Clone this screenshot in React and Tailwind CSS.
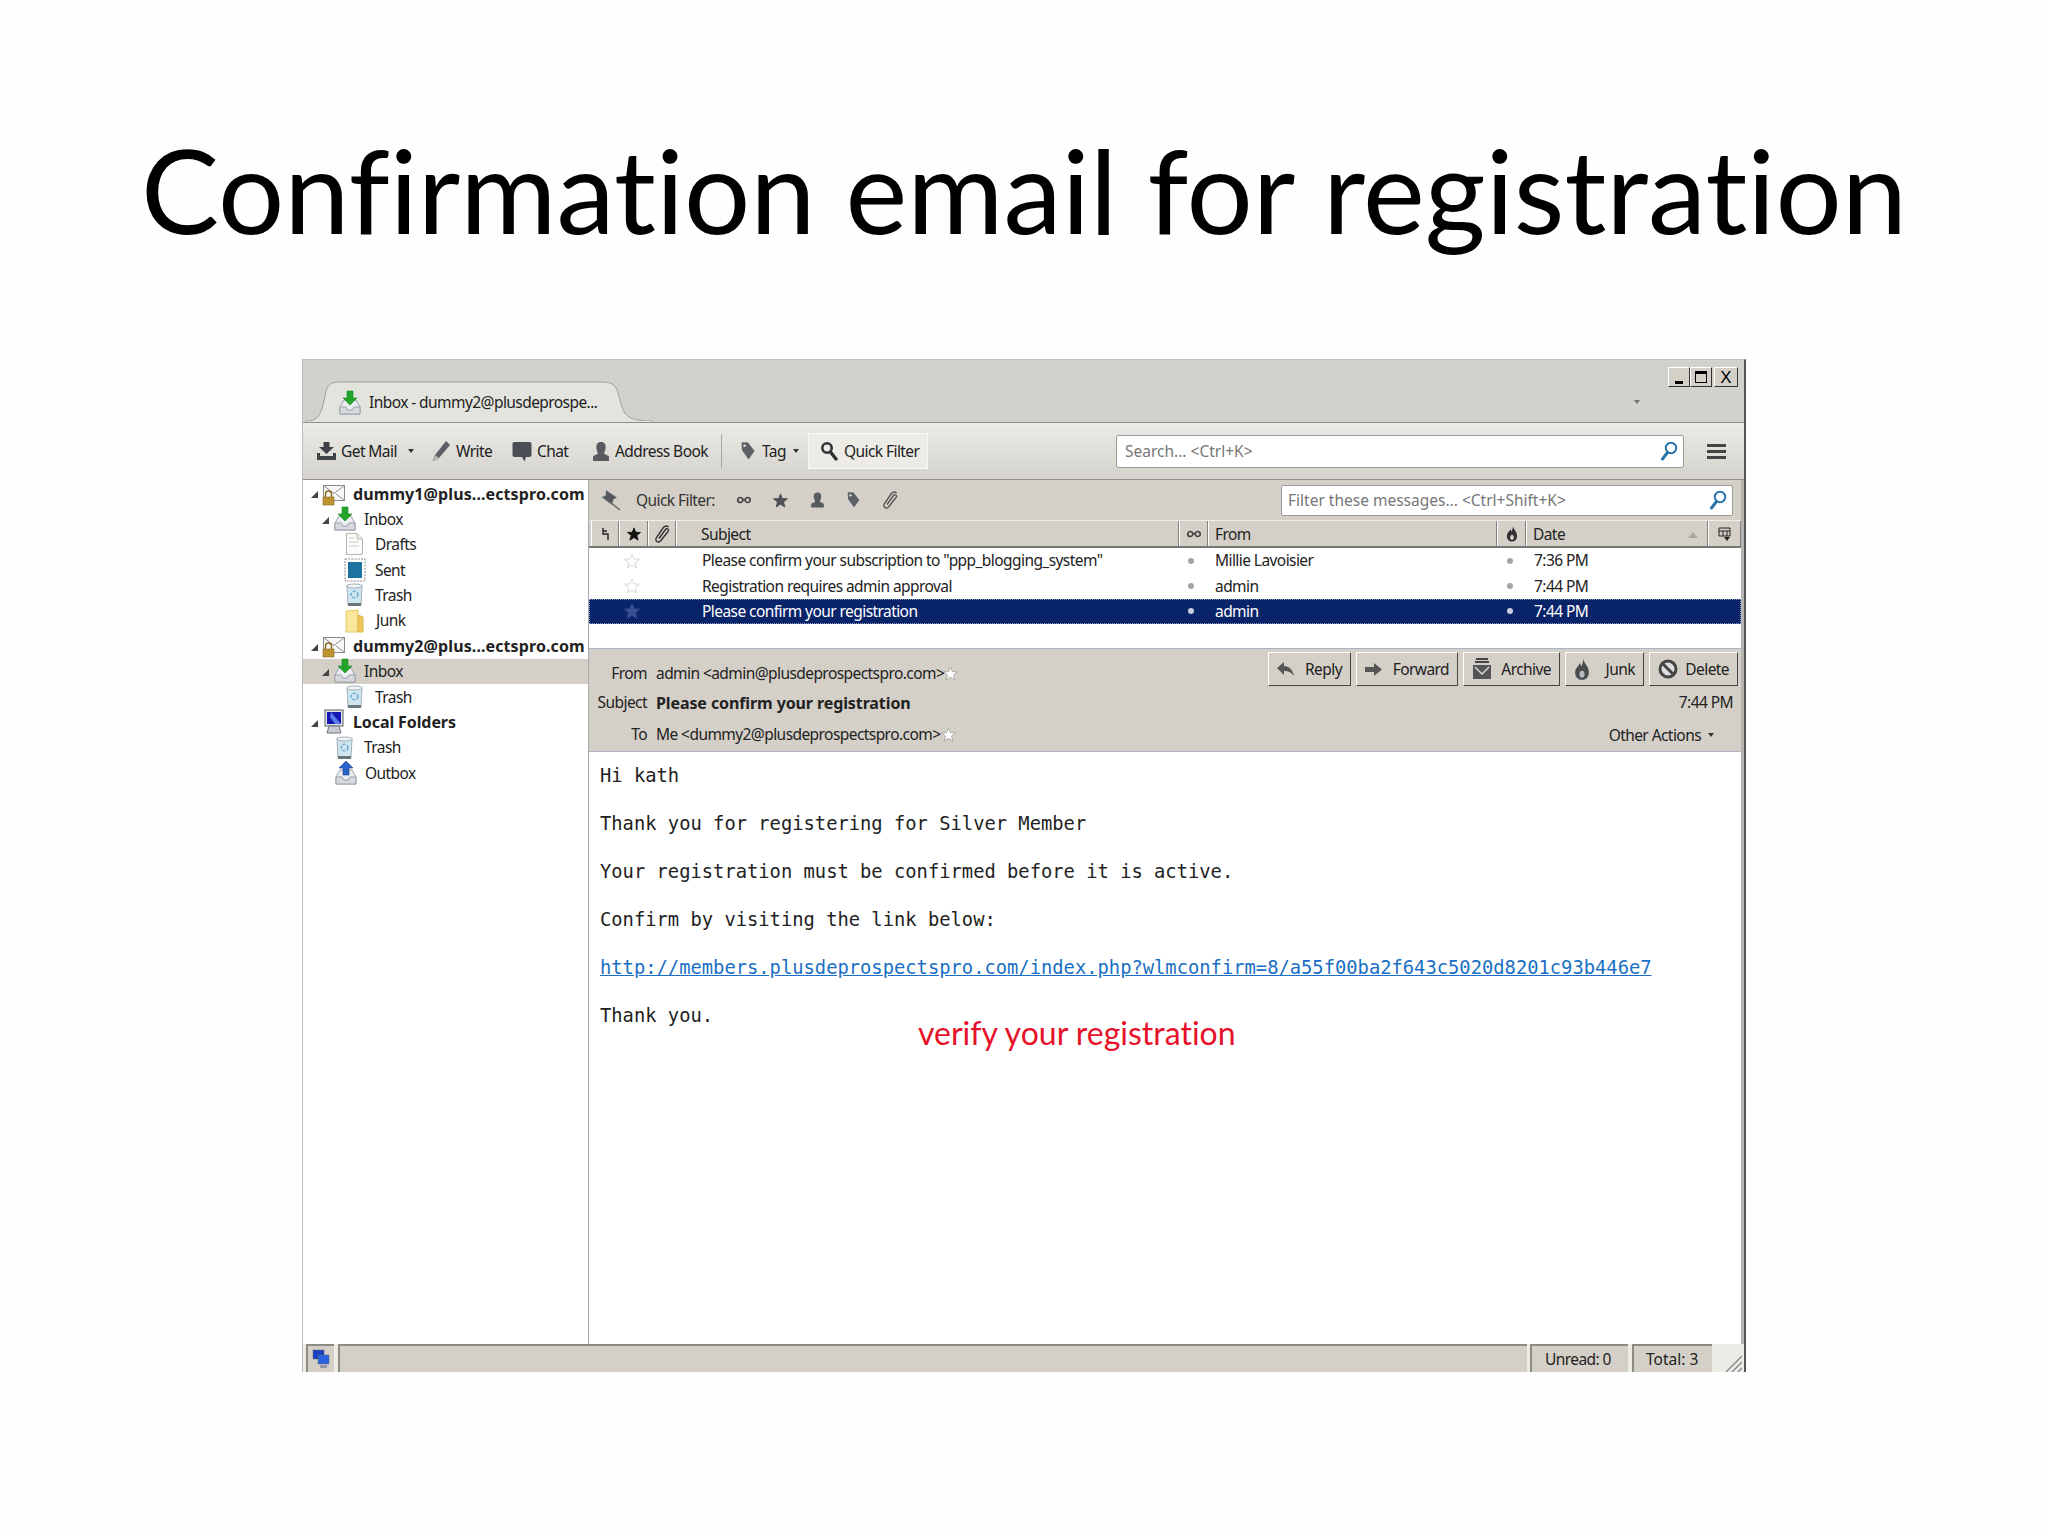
const base = "font-['Noto_Sans','Liberation_Sans',sans-serif] leading-none text-[#222] whitespace-nowrap";
const ui = base + " tracking-[-0.57px] text-[15.5px] pt-px";
const bold = base + " tracking-[-0.1px] text-[16px] font-bold text-[#111]";

const Svg = ({ w, h, vb, children, className = "" }) => (
  <svg width={w} height={h} viewBox={vb || `0 0 ${w} ${h}`} className={"shrink-0 block " + className}>{children}</svg>
);

const TrayIcon = ({ arrow = "down", size = 22 }) => (
  <Svg w={size} h={size + 4} vb="0 0 22 26">
    <path d="M5 10 L17 10 L21 17 V24 H1 V17 Z" fill="#e9ecf0" stroke="#9aa1aa" />
    <path d="M1 17 H7 L8.5 20 H13.5 L15 17 H21 V24 H1 Z" fill="#d6dade" stroke="#9aa1aa" />
    {arrow === "down" ? (
      <path d="M8 1 H14 V8 H18 L11 15 L4 8 H8 Z" fill="#22a62a" stroke="#1a8a20" strokeWidth="0.6" />
    ) : (
      <path d="M8 15 H14 V8 H18 L11 1 L4 8 H8 Z" fill="#2a62c8" stroke="#1b3f8c" strokeWidth="0.6" />
    )}
  </Svg>
);
const TrashIcon = () => (
  <Svg w={19} h={24}>
    <path d="M2 3 H17 L16 22 H3 Z" fill="#cfe6f0" stroke="#a4b0b6" />
    <rect x="3" y="20" width="13" height="3" fill="#6b757c" />
    <ellipse cx="9.5" cy="3" rx="8" ry="2" fill="#f0f4f6" stroke="#a4b0b6" />
    <circle cx="9.5" cy="11.5" r="3.4" fill="none" stroke="#5ea9d0" strokeWidth="1.4" strokeDasharray="3 1.6" />
  </Svg>
);
const DraftsIcon = () => (
  <Svg w={19} h={24}>
    <path d="M1.5 1.5 H12 L17.5 7 V22.5 H1.5 Z" fill="#fbfbf9" stroke="#b6b6b0" />
    <path d="M12 1.5 V7 H17.5" fill="#ececea" stroke="#b6b6b0" />
    <path d="M4 6 H9 M4 10 H14 M4 14 H14" stroke="#c8c8c2" />
  </Svg>
);
const SentIcon = () => (
  <Svg w={22} h={24}>
    <rect x="1" y="1" width="20" height="22" fill="#fff" stroke="#888" strokeDasharray="2 1.2" />
    <rect x="4" y="4" width="14" height="16" fill="#1c739f" />
  </Svg>
);
const JunkIcon = () => (
  <Svg w={19} h={24}>
    <path d="M1 2 L13 1 V23 H1 Z" fill="#fae89a" stroke="#e6cc6a" />
    <path d="M13 6 L18 8 V23 H13 Z" fill="#eec95a" stroke="#d7b44a" />
  </Svg>
);
const AccountIcon = () => (
  <Svg w={24} h={24}>
    <rect x="1.5" y="3.5" width="21" height="15" fill="#f7f7f5" stroke="#8b8b8b" />
    <path d="M1.5 3.5 L12 11.5 L22.5 3.5 M14 12 L22.5 18.5" fill="none" stroke="#8b8b8b" />
    <path d="M3.5 15 V12 a3 3 0 0 1 6 0 V15" fill="none" stroke="#8a6a1e" strokeWidth="1.4" />
    <rect x="1" y="15" width="11" height="8" fill="#bf9430" stroke="#8a6a1e" strokeWidth="0.6" />
  </Svg>
);
const LocalIcon = () => (
  <Svg w={22} h={26}>
    <rect x="2" y="1" width="18" height="16" fill="#dfe3e8" stroke="#5c6068" />
    <rect x="4" y="3" width="14" height="12" fill="#1616b4" />
    <path d="M8 3 L18 15 H12 L7 8 Z" fill="#5a7ae8" />
    <path d="M6 17 H16 L18 24 H4 Z" fill="#c8ccd2" stroke="#70747a" />
  </Svg>
);
const Twisty = () => <Svg w={9} h={9} className="mt-[2px]"><path d="M8 1 V8 H1 Z" fill="#444" /></Svg>;
const Star = ({ fill = "#fff", stroke = "#d8d8d4", size = 16 }) => (
  <Svg w={size} h={size} vb="0 0 16 16"><path d="M8 1 L10 6 L15.4 6.2 L11.2 9.6 L12.7 15 L8 12 L3.3 15 L4.8 9.6 L.6 6.2 L6 6 Z" fill={fill} stroke={stroke} /></Svg>
);
const Glasses = ({ w = 14 }) => (
  <Svg w={w} h={8} vb="0 0 14 8"><circle cx="3.3" cy="4" r="2.5" fill="none" stroke="#444" strokeWidth="1.7" /><circle cx="10.7" cy="4" r="2.5" fill="none" stroke="#444" strokeWidth="1.7" /><path d="M5.6 3.6 H8.4" stroke="#444" strokeWidth="1.4" /></Svg>
);
const Person = ({ w = 18, h = 20, fill = "#575a5e" }) => (
  <Svg w={w} h={h} vb="0 0 18 20"><path d="M9 1 C12.5 1 13.8 3.6 13.4 6.6 C13 9 12.4 10.4 11.8 12 L16.6 14.6 V19 H1.4 V14.6 L6.2 12 C5.6 10.4 5 9 4.6 6.6 C4.2 3.6 5.5 1 9 1 Z" fill={fill} /></Svg>
);
const TagI = ({ w = 16, h = 20 }) => (
  <Svg w={w} h={h} vb="0 0 16 20"><path d="M1 1 H8 L15 10 L8.5 19 L1.5 9 Z" fill="#5d6064" stroke="#e8e8e4" strokeWidth="0.7" /><circle cx="4.6" cy="4.8" r="1.3" fill="#ddd" /></Svg>
);
const Clip = ({ color = "#444" }) => (
  <Svg w={16} h={18} vb="0 0 16 18"><path d="M5 13.5 L11.5 4.5 C13 2.5 15.5 4.5 14 6.5 L6.5 16 C4 18.5 .5 16 2.5 12.5 L9 3 C11 .5 13 .5 14.5 2" fill="none" stroke={color} strokeWidth="1.4" /></Svg>
);
const Lens = ({ w = 18, h = 20 }) => (
  <Svg w={w} h={h} vb="0 0 18 20"><circle cx="11" cy="7" r="5.2" fill="none" stroke="#2b74ac" strokeWidth="2" /><path d="M7.5 11.5 L2.5 18" stroke="#2b74ac" strokeWidth="3" strokeLinecap="round" /></Svg>
);
const Flame = ({ w = 14, h = 20, fill = "#333", inner = "#d4d0c8" }) => (
  <Svg w={w} h={h} vb="0 0 14 20"><path d="M8 0 C8 5 13 7 13 13 C13 17 10.5 19.5 7 19.5 C3.5 19.5 1 17 1 13 C1 9 4 8 5 5 C6 6 6 7 6 8 C7.5 6 8.5 3 8 0 Z" fill={fill} /><ellipse cx="7" cy="14.5" rx="2.2" ry="3" fill={inner} /></Svg>
);
const Caret = ({ className = "" }) => <Svg w={6} h={4} className={className}><path d="M0 0 H6 L3 4 Z" fill="#333" /></Svg>;
const Dot = ({ c = "#9a9a9a" }) => <span className="block w-[6px] h-[6px] rounded-full shrink-0" style={{ background: c }} />;

const Label = ({ children, className = "" }) => <span className={ui + " " + className}>{children}</span>;

function TreeRow({ indent, twisty, icon, iconW, text, isBold, wide, selected, gap = 6 }) {
  return (
    <div className={"flex items-center h-[25.4px] " + (selected ? "bg-[#d4d0c8]" : "")} style={{ paddingLeft: indent }}>
      {twisty ? <span className="w-[12px] shrink-0"><Twisty /></span> : null}
      <span className="shrink-0 flex justify-center" style={{ width: iconW }}>{icon}</span>
      <span className={(isBold ? bold : ui) + (wide ? " tracking-[0.1px]" : "")} style={{ marginLeft: gap }}>{text}</span>
    </div>
  );
}

function Sidebar() {
  return (
    <div className="w-[286px] shrink-0 bg-white border-r border-[#a9a9b0] pt-px">
      <TreeRow indent={7} twisty iconW={24} icon={<AccountIcon />} text="dummy1@plus...ectspro.com" isBold wide gap={7} />
      <TreeRow indent={18} twisty iconW={24} icon={<TrayIcon />} text="Inbox" gap={7} />
      <TreeRow indent={41} iconW={21} icon={<DraftsIcon />} text="Drafts" gap={10} />
      <TreeRow indent={41} iconW={22} icon={<SentIcon />} text="Sent" gap={9} />
      <TreeRow indent={41} iconW={21} icon={<TrashIcon />} text="Trash" gap={10} />
      <TreeRow indent={41} iconW={21} icon={<JunkIcon />} text="Junk" gap={11} />
      <TreeRow indent={7} twisty iconW={24} icon={<AccountIcon />} text="dummy2@plus...ectspro.com" isBold wide gap={7} />
      <TreeRow indent={18} twisty iconW={24} icon={<TrayIcon />} text="Inbox" selected gap={7} />
      <TreeRow indent={41} iconW={21} icon={<TrashIcon />} text="Trash" gap={10} />
      <TreeRow indent={7} twisty iconW={24} icon={<LocalIcon />} text="Local Folders" isBold gap={7} />
      <TreeRow indent={31} iconW={21} icon={<TrashIcon />} text="Trash" gap={9} />
      <TreeRow indent={31} iconW={24} icon={<TrayIcon arrow="up" />} text="Outbox" gap={7} />
    </div>
  );
}

function TabStrip() {
  return (
    <div className="h-[63px] bg-[#d2d2cc] border-b border-[#8e8e8a] flex items-end pl-[3px] relative">
      <div className="relative w-[346px] h-[41px] flex items-center pl-[33px] pt-[2px]">
        <svg width="346" height="41" viewBox="0 0 346 41" className="absolute left-0 top-0">
          <path d="M0 40 C10 40 14 36 17 24 L20 10 C22 3 26 1 33 1 H296 C306 1 310 4 312 12 L316 26 C319 36 326 40 346 40 V41 H0 Z" fill="#e4e4df" stroke="#a0a09a" />
          <rect x="1" y="40" width="344" height="2" fill="#e4e4df" />
        </svg>
        <span className="relative flex items-center">
          <TrayIcon size={22} />
          <Label className="ml-[8px]">Inbox - dummy2@plusdeprospe...</Label>
        </span>
      </div>
      <div className="flex-1 flex flex-col items-end self-stretch pt-[7px] pr-[6px]">
        <div className="flex">
          <WinBtn w={22}><span className="block w-[8px] h-[3px] bg-black mt-[10px]" /></WinBtn>
          <WinBtn w={22}><span className="block w-[12px] h-[12px] border border-black border-t-[3px]" /></WinBtn>
          <span className="w-[2px]" />
          <WinBtn w={24}><span className="text-[17px] leading-none font-['Liberation_Sans',sans-serif] text-black">X</span></WinBtn>
        </div>
        <Caret className="mt-[13px] mr-[98px] opacity-60" />
      </div>
    </div>
  );
}
const WinBtn = ({ w, children }) => (
  <div className="h-[20px] flex items-center justify-center bg-[#d4d0c8] border border-t-white border-l-white border-r-[#333] border-b-[#333]" style={{ width: w }}>{children}</div>
);

function Toolbar() {
  return (
    <div className="h-[57px] bg-gradient-to-b from-[#ecebe7] to-[#d4d2cb] border-b border-[#8e8e8a] flex items-center pl-[13px]">
      <Svg w={21} h={20}>
        <path d="M7.5 1 H13.5 V6 H18 L10.5 13 L3 6 H7.5 Z" fill="#3f4347" />
        <path d="M1 12 H4 V15 H17 V12 H20 V19 H1 Z" fill="#3f4347" />
      </Svg>
      <Label className="ml-[4px] w-[54px]">Get Mail</Label>
      <Caret className="ml-[13px]" />
      <Svg w={19} h={22} className="ml-[18px]">
        <path d="M14 1 L18 5 L7 18 L3 15 Z" fill="#5c6064" />
        <path d="M3 15 L7 18 L1 21 Z" fill="#bbb" stroke="#777" strokeWidth="0.5" />
      </Svg>
      <Label className="ml-[5px] w-[36px]">Write</Label>
      <Svg w={20} h={21} className="ml-[20px]">
        <path d="M2.5 1 H17.5 C19 1 19.5 2 19.5 3 V14 C19.5 15 19 16 17.5 16 H14 L12.5 20.5 L10 16 H2.5 C1 16 .5 15 .5 14 V3 C.5 2 1 1 2.5 1 Z" fill="#4a4f55" />
      </Svg>
      <Label className="ml-[5px] w-[33px]">Chat</Label>
      <span className="ml-[21px]"><Person w={20} h={21} /></span>
      <Label className="ml-[4px] w-[92px]">Address Book</Label>
      <span className="ml-[14px] w-px h-[34px] bg-[#a8a8a2]" />
      <span className="ml-[18px]"><TagI /></span>
      <Label className="ml-[6px] w-[25px]">Tag</Label>
      <Caret className="ml-[6px]" />
      <div className="ml-[9px] w-[120px] h-[36px] flex items-center pl-[11px] bg-[#ecebe6] border border-[#f7f7f4]">
        <Svg w={18} h={20}>
          <circle cx="7" cy="7" r="4.7" fill="#e8e8e8" stroke="#333" strokeWidth="2.6" />
          <path d="M10.5 11 L16 18" stroke="#333" strokeWidth="3.4" strokeLinecap="round" />
        </Svg>
        <Label className="ml-[6px]">Quick Filter</Label>
      </div>
      <div className="ml-[188px] w-[568px] h-[33px] bg-white border border-[#9c9c98] rounded-[2px] flex items-center pl-[8px] pr-[5px] justify-between">
        <Label className="text-[#777] tracking-[0px]">Search... &lt;Ctrl+K&gt;</Label>
        <Lens />
      </div>
      <div className="ml-[23px] w-[19px] flex flex-col gap-[3px]">
        <span className="block h-[3px] bg-[#444]" />
        <span className="block h-[3px] bg-[#444]" />
        <span className="block h-[3px] bg-[#444]" />
      </div>
    </div>
  );
}

function QuickFilter() {
  return (
    <div className="h-[40px] bg-[#d4d0c8] flex items-center pl-[10px]">
      <Svg w={22} h={22}>
        <path d="M7 1 L18 8.5 L14.5 10.5 L13 16 L2.5 8 L6.5 6.5 Z" fill="#55595d" stroke="#bbb" strokeWidth="0.5" />
        <path d="M11 13 L21 21" stroke="#666" strokeWidth="1.5" />
      </Svg>
      <Label className="ml-[15px] w-[80px] text-[#333]">Quick Filter:</Label>
      <span className="ml-[20px]"><Glasses w={16} /></span>
      <span className="ml-[21px]"><Star fill="#4e5256" stroke="#4e5256" size={15} /></span>
      <span className="ml-[22px]"><Person w={15} h={18} /></span>
      <span className="ml-[21px]"><TagI w={15} h={18} /></span>
      <span className="ml-[21px]"><Clip color="#555" /></span>
      <div className="ml-[383px] w-[452px] h-[31px] bg-white border border-[#9c9c98] rounded-[2px] flex items-center pl-[6px] pr-[5px] justify-between">
        <Label className="text-[#777] tracking-[0px]">Filter these messages... &lt;Ctrl+Shift+K&gt;</Label>
        <Lens />
      </div>
    </div>
  );
}

const Th = ({ w, className = "", children }) => (
  <div className={"h-full shrink-0 flex items-center border-l border-l-white border-r border-r-[#808080] " + className} style={{ width: w }}>{children}</div>
);

function ListHeader() {
  return (
    <div className="h-[28px] bg-[#d4d0c8] flex border-b-2 border-[#777] border-t border-t-[#eee] pl-[2px]">
      <Th w={28} className="justify-center">
        <Svg w={9} h={14}><path d="M2 1 V7 H7 V13 M2 4 H6" fill="none" stroke="#222" strokeWidth="1.4" /></Svg>
      </Th>
      <Th w={29} className="justify-center"><Star fill="#111" stroke="#111" size={14} /></Th>
      <Th w={28} className="justify-center"><Clip color="#333" /></Th>
      <Th w={503} className="pl-[24px] pt-[2px]"><Label>Subject</Label></Th>
      <Th w={29} className="justify-center"><Glasses /></Th>
      <Th w={289} className="pl-[6px] pt-[2px]"><Label>From</Label></Th>
      <Th w={29} className="justify-center"><Flame w={12} h={17} inner="#d4d0c8" /></Th>
      <Th w={182} className="pl-[6px] pt-[2px] justify-between pr-[9px]">
        <Label>Date</Label>
        <Svg w={10} h={6}><path d="M0 6 L5 0 L10 6 Z" fill="#a9a9a4" /></Svg>
      </Th>
      <Th w={33} className="justify-center">
        <Svg w={13} h={14}><path d="M1 1 H12 V9 H1 Z M1 4 H12 M5 4 V9 M9 4 V9" fill="none" stroke="#222" /><path d="M6 10 H12 L9 14 Z" fill="#222" /></Svg>
      </Th>
    </div>
  );
}

function Row({ subject, from, date, selected }) {
  const text = selected ? "text-white" : "text-[#222]";
  return (
    <div className={"h-[25.4px] flex items-center pl-[2px] " + (selected ? "bg-[#0a246a] outline-1 -outline-offset-1 outline-dotted outline-[#8e98ba]" : "bg-white")}>
      <span className="w-[53px] shrink-0 flex justify-center pl-[28px]">
        {selected ? <Star fill="#3a4f92" stroke="#3a4f92" /> : <Star />}
      </span>
      <span className="w-[58px] shrink-0" />
      <Label className={"w-[479px] " + text}>{subject}</Label>
      <span className="w-[20px] shrink-0 flex justify-center"><Dot c={selected ? "#c8cde0" : "#a4a4a4"} /></span>
      <Label className={"w-[292px] ml-[14px] " + text}>{from}</Label>
      <span className="w-[6px] shrink-0"><Dot c={selected ? "#c8cde0" : "#a4a4a4"} /></span>
      <Label className={"ml-[21px] " + text}>{date}</Label>
    </div>
  );
}

const MsgBtn = ({ w, ml, icon, text }) => (
  <div className="h-[34px] flex items-center justify-between px-[8px] bg-[#d4d0c8] border border-t-white border-l-white border-r-[#444] border-b-[#444] shrink-0" style={{ width: w, marginLeft: ml }}>
    {icon}
    <Label className="pt-[2px]">{text}</Label>
  </div>
);

function MessageHeader() {
  return (
    <div className="h-[104px] bg-[#d4d0c8] border-t border-t-[#a9b4c6] border-b border-b-[#b0b4c0] flex">
      <div className="w-[660px] flex flex-col pt-[9px]">
        <div className="h-[30px] flex items-center">
          <Label className="w-[58px] text-right text-[#8a8a86]">From</Label>
          <Label className="ml-[9px] w-[287px]">admin &lt;admin@plusdeprospectspro.com&gt;</Label>
          <Star size={15} stroke="#a8a8a2" />
        </div>
        <div className="h-[30px] flex items-center">
          <Label className="w-[58px] text-right text-[#8a8a86]">Subject</Label>
          <span className={bold + " ml-[9px]"}>Please confirm your registration</span>
        </div>
        <div className="h-[34px] flex items-center">
          <Label className="w-[58px] text-right text-[#8a8a86]">To</Label>
          <Label className="ml-[9px] w-[285px]">Me &lt;dummy2@plusdeprospectspro.com&gt;</Label>
          <Star size={15} stroke="#a8a8a2" />
        </div>
      </div>
      <div className="flex-1 flex flex-col items-end pt-[3px] pr-[3px]">
        <div className="flex">
          <MsgBtn w={83} icon={<Svg w={17} h={15}><path d="M7 0 V4 C12 4 16 8 17 14 C14 10 11 9 7 9 V13 L0 6 Z" fill="#555" /></Svg>} text="Reply" />
          <MsgBtn w={102} ml={5} icon={<Svg w={17} h={13}><path d="M0 4 H9 V0 L17 6.5 L9 13 V9 H0 Z" fill="#555" /></Svg>} text="Forward" />
          <MsgBtn w={97} ml={5} icon={<Svg w={20} h={22}><path d="M4 1 H16 M3 4 H17" stroke="#444" strokeWidth="2" /><rect x="1" y="7" width="18" height="14" fill="#555" /><path d="M3 9 L10 16 L17 9" fill="none" stroke="#ddd" strokeWidth="1.4" /></Svg>} text="Archive" />
          <MsgBtn w={79} ml={5} icon={<Flame w={16} h={24} fill="#4a4d50" inner="#b8bbbe" />} text="Junk" />
          <MsgBtn w={89} ml={5} icon={<Svg w={20} h={20}><circle cx="10" cy="10" r="8" fill="#ddd" stroke="#444" strokeWidth="3" /><path d="M5 5 L15 15" stroke="#444" strokeWidth="3" /></Svg>} text="Delete" />
        </div>
        <Label className="mt-[8px] mr-[5px]">7:44 PM</Label>
        <div className="mt-[16px] flex items-center mr-[24px]">
          <Label className="tracking-[-0.35px]">Other Actions</Label>
          <Caret className="ml-[7px]" />
        </div>
      </div>
    </div>
  );
}

const BodyLine = ({ children, className = "" }) => (
  <div className={"h-[48px] leading-[24px] " + className}>{children}</div>
);

function MessageBody() {
  return (
    <div className="flex-1 bg-white pl-[11px] pt-[12px] relative font-['DejaVu_Sans_Mono','Liberation_Mono',monospace] text-[18.8px] text-[#222] whitespace-nowrap">
      <BodyLine>Hi kath</BodyLine>
      <BodyLine>Thank you for registering for Silver Member</BodyLine>
      <BodyLine>Your registration must be confirmed before it is active.</BodyLine>
      <BodyLine>Confirm by visiting the link below:</BodyLine>
      <BodyLine className="text-[#1a6fc4] underline">http://members.plusdeprospectspro.com/index.php?wlmconfirm=8/a55f00ba2f643c5020d8201c93b446e7</BodyLine>
      <BodyLine>Thank you.</BodyLine>
      <span className="absolute left-[329px] top-[265px] font-['Lato','Open_Sans',sans-serif] [font-variant-ligatures:none] text-[32px] leading-none text-[#e5122a]">verify your registration</span>
    </div>
  );
}

function StatusBar() {
  const cell = "h-full bg-[#d4d0c8] border-t-2 border-l-2 border-t-[#8b8b86] border-l-[#8b8b86] flex items-center shrink-0";
  return (
    <div className="h-[28px] bg-[#ecebe6] flex pl-[3px] overflow-hidden">
      <div className={cell + " w-[28px] justify-center"}>
        <Svg w={18} h={20}>
          <rect x="1" y="1" width="11" height="9" fill="#1a3fc0" stroke="#667" strokeWidth="0.5" />
          <rect x="6" y="6" width="11" height="9" fill="#2a62e0" stroke="#667" strokeWidth="0.5" />
          <path d="M8 16 H15 V19 H8 Z" fill="#99a" />
        </Svg>
      </div>
      <div className={cell + " w-[1189px] ml-[4px]"} />
      <div className={cell + " w-[98px] ml-[3px] pl-[13px]"}><Label className="tracking-[-0.4px]">Unread: 0</Label></div>
      <div className={cell + " w-[80px] ml-[4px] pl-[12px]"}><Label className="tracking-[0px]">Total: 3</Label></div>
      <div className="flex-1 flex items-end justify-end pr-[2px]">
        <Svg w={18} h={18}><path d="M2 18 L18 2 M8 18 L18 8 M14 18 L18 14" stroke="#888" strokeWidth="1.4" /></Svg>
      </div>
    </div>
  );
}

export default function App() {
  return (
    <div className="w-[2048px] h-[1536px] bg-[#fefefe] overflow-hidden">
      <div className="h-[359px] pl-[141px] pt-[117px]">
        <h1 className="font-['Lato','Open_Sans',sans-serif] [font-variant-ligatures:none] font-normal text-[117px] leading-[144px] text-black whitespace-nowrap">Confirmation email for registration</h1>
      </div>
      <div className="ml-[302px] w-[1444px] h-[1013px] bg-[#d4d0c8] border-l border-l-[#bdbdb8] border-t border-t-[#c0c0bc] border-r-2 border-r-[#555] flex flex-col">
        <TabStrip />
        <Toolbar />
        <div className="flex-1 flex min-h-0 bg-[#b4b4b0] pr-[3px]">
          <Sidebar />
          <div className="flex-1 flex flex-col min-w-0">
            <QuickFilter />
            <ListHeader />
            <Row subject={'Please confirm your subscription to "ppp_blogging_system"'} from="Millie Lavoisier" date="7:36 PM" />
            <Row subject="Registration requires admin approval" from="admin" date="7:44 PM" />
            <Row subject="Please confirm your registration" from="admin" date="7:44 PM" selected />
            <div className="h-[24px] bg-white" />
            <MessageHeader />
            <MessageBody />
          </div>
        </div>
        <StatusBar />
      </div>
    </div>
  );
}
